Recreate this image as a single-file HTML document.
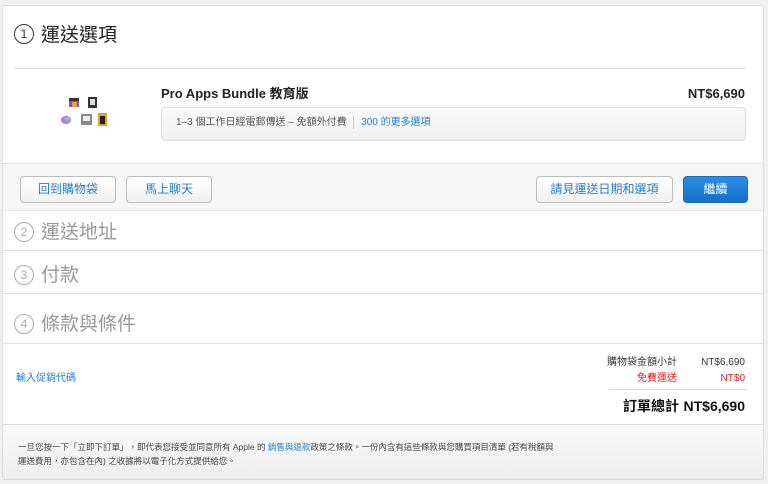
<!DOCTYPE html>
<html><head><meta charset="utf-8">
<style>
*{margin:0;padding:0;box-sizing:border-box}
body{width:768px;height:484px;background:#f0f0f0;font-family:"Liberation Sans","Noto Sans CJK TC",sans-serif;position:relative;overflow:hidden;color:#333}
.card{position:absolute;left:2px;top:5px;width:762px;height:475px;background:#fff;border:1px solid #dcdcdc;border-radius:3px;overflow:hidden}
.abs{position:absolute}
.circ{position:absolute;width:20px;height:20px;border:1px solid #333;border-radius:50%;font-size:12px;text-align:center;line-height:18px}
.circ.g{border-color:#aaa;color:#aaa}
.h{position:absolute;font-size:19px;line-height:24px}
.h.g{color:#999}
.btn{position:absolute;top:170px;height:27px;border:1px solid #bdbdbd;border-radius:4px;background:linear-gradient(#fff,#f0f0f0);color:#2a7cc6;font-size:12px;text-align:center;line-height:25px}
.hr{position:absolute;left:0;width:762px;height:1px;background:#e2e2e2}
.blue{color:#1f7ccf}
.s{font-size:10px;line-height:14px}
.t{font-size:14px;line-height:18px;font-weight:bold;color:#111}
</style></head><body>
<div class="card">
  <div class="circ" style="left:11px;top:18px">1</div>
  <div class="h" style="left:38px;top:18px;color:#222">運送選項</div>
  <div class="abs" style="left:11px;top:62px;width:732px;height:1px;background:#ddd"></div>

  <svg class="abs" style="left:55px;top:88px" width="56" height="40" viewBox="0 0 56 40">
    <rect x="11" y="4" width="10" height="9" fill="#7a4fd3"/><rect x="11" y="4" width="10" height="3" fill="#333"/><rect x="14" y="8" width="5" height="5" fill="#e9a23b"/>
    <rect x="30" y="3" width="9" height="11" fill="#333"/><rect x="32" y="5" width="5" height="6" fill="#ddd"/>
    <ellipse cx="8" cy="26" rx="5" ry="4" fill="#c76ee0"/><ellipse cx="9" cy="25" rx="3" ry="2" fill="#6cc"/>
    <rect x="23" y="20" width="11" height="11" fill="#888"/><rect x="25" y="22" width="7" height="5" fill="#eee"/>
    <rect x="40" y="19" width="9" height="13" fill="#e6a020"/><rect x="42" y="22" width="5" height="8" fill="#222"/>
  </svg>

  <div class="abs" style="left:158px;top:79px;font-size:13px;line-height:18px;font-weight:bold;color:#222">Pro Apps Bundle 教育版</div>
  <div class="abs" style="right:18px;top:79px;font-size:13px;line-height:18px;font-weight:bold;color:#222">NT$6,690</div>
  <div class="abs" style="left:158px;top:101px;width:585px;height:34px;border:1px solid #ddd;border-radius:4px;background:linear-gradient(#fafafa,#f0f0f0)"></div>
  <div class="abs" style="left:173px;top:110px;font-size:10px;line-height:14px;color:#555">1–3 個工作日經電郵傳送 – 免額外付費 <span style="display:inline-block;width:1px;height:13px;background:#ccc;vertical-align:middle;margin:0 4px"></span> <span class="blue">300 的更多選項</span></div>

  <div class="abs" style="left:0;top:157px;width:762px;height:48px;background:#f6f6f6;border-top:1px solid #e2e2e2;border-bottom:1px solid #e6e6e6"></div>
  <div class="btn" style="left:17px;width:96px">回到購物袋</div>
  <div class="btn" style="left:123px;width:86px">馬上聊天</div>
  <div class="btn" style="left:533px;width:137px">請見運送日期和選項</div>
  <div class="btn" style="left:680px;width:65px;background:linear-gradient(#2b8ee2,#1271c9);border-color:#1a6cbd;color:#fff">繼續</div>

  <div class="circ g" style="left:11px;top:216px">2</div>
  <div class="h g" style="left:38px;top:215px">運送地址</div>
  <div class="hr" style="top:244px"></div>
  <div class="circ g" style="left:11px;top:259px">3</div>
  <div class="h g" style="left:38px;top:258px">付款</div>
  <div class="hr" style="top:287px"></div>
  <div class="circ g" style="left:11px;top:308px">4</div>
  <div class="h g" style="left:38px;top:307px">條款與條件</div>
  <div class="hr" style="top:337px"></div>

  <div class="abs blue s" style="left:13px;top:366px">輸入促銷代碼</div>
  <div class="abs s" style="left:604px;top:350px;color:#333">購物袋金額小計</div>
  <div class="abs s" style="right:18px;top:350px;color:#333">NT$6,690</div>
  <div class="abs s" style="left:634px;top:366px;color:#e0201e">免費運送</div>
  <div class="abs s" style="right:18px;top:366px;color:#e0201e">NT$0</div>
  <div class="abs" style="left:606px;top:383px;width:138px;height:1px;background:#ddd"></div>
  <div class="abs t" style="left:620px;top:391px">訂單總計</div>
  <div class="abs t" style="right:18px;top:391px">NT$6,690</div>

  <div class="abs" style="left:0;top:418px;width:762px;height:60px;border-top:1px solid #ddd;background:linear-gradient(#fafafa,#ececec)"></div>
  <div class="abs" style="left:15px;top:434px;font-size:8.5px;line-height:14px;color:#444;width:570px">一旦您按一下「立即下訂單」，即代表您接受並同意所有 Apple 的 <span class="blue">銷售與退款</span>政策之條款。一份內含有這些條款與您購買項目清單 (若有稅額與<br>運送費用，亦包含在內) 之收據將以電子化方式提供給您。</div>
</div>
</body></html>
